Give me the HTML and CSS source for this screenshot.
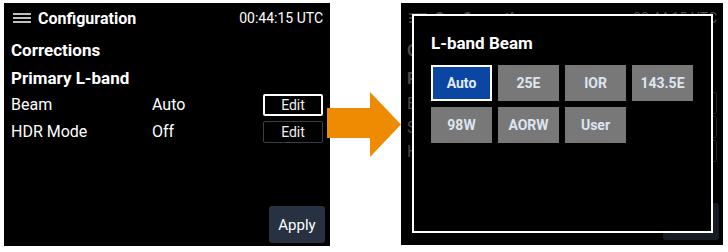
FILE: index.html
```html
<!DOCTYPE html>
<html>
<head>
<meta charset="utf-8">
<link rel="stylesheet" href="styles.css">
</head>
<body>
<div class="stage">
  <section class="screen main">
    <header class="bar">
      <svg class="burger" width="18" height="10" viewBox="0 0 18 10"><path d="M0 1H18M0 5H18M0 9H18" stroke="#fff" stroke-width="1.6"/></svg>
      <span class="title">Configuration</span>
      <span class="clock">00:44:15 UTC</span>
    </header>
    <div class="heading first">Corrections</div>
    <div class="heading">Primary L-band</div>
    <div class="row"><span class="label">Beam</span><span class="value">Auto</span><button class="edit focus">Edit</button></div>
    <div class="row"><span class="label">HDR Mode</span><span class="value">Off</span><button class="edit">Edit</button></div>
    <div class="footer"><button class="apply">Apply</button></div>
  </section>

  <div class="arrow">
    <svg width="71" height="243" viewBox="0 0 71 243"><polygon points="-3,105 40,105 40,89 71,121.5 40,154 40,135 -3,135" fill="#ef8b03"/></svg>
  </div>

  <section class="screen popup">
    <div class="behind">
      <header class="bar">
        <svg class="burger" width="18" height="10" viewBox="0 0 18 10"><path d="M0 1H18M0 5H18M0 9H18" stroke="#4a4a4a" stroke-width="1.6"/></svg>
        <span class="title">Configuration</span>
        <span class="clock">00:44:15 UTC</span>
      </header>
      <div class="heading first">C</div>
      <div class="heading">P</div>
      <div class="row"><span class="value">B</span><button class="edit"></button></div>
      <div class="row"><span class="value">S</span><button class="edit"></button></div>
      <div class="row"><span class="value">H</span><button class="edit"></button></div>
      <div class="footer"><button class="apply"></button></div>
    </div>
    <div class="modal">
      <div class="modal-title">L-band Beam</div>
      <div class="choices">
        <button class="choice selected">Auto</button>
        <button class="choice">25E</button>
        <button class="choice">IOR</button>
        <button class="choice">143.5E</button>
        <button class="choice">98W</button>
        <button class="choice">AORW</button>
        <button class="choice">User</button>
      </div>
    </div>
  </section>
</div>
</body>
</html>
```

FILE: styles.css
```css
html, body {
  margin: 0;
  padding: 0;
  background: #ffffff;
}

body {
  width: 728px;
  height: 252px;
  overflow: hidden;
  font-family: Roboto, "Liberation Sans", sans-serif;
}

.stage {
  display: flex;
  align-items: flex-start;
  padding: 3px 0 0 4px;
}

.screen {
  background: #000;
  color: #fff;
  box-sizing: border-box;
}

.main {
  width: 326px;
  height: 243px;
  display: flex;
  flex-direction: column;
  padding: 0 5px 3px 7px;
}

.bar {
  height: 30px;
  display: flex;
  align-items: center;
  padding: 0 2px;
}

.burger {
  display: block;
  margin-right: 7px;
}

.title {
  font-size: 16px;
  font-weight: 700;
}

.clock {
  margin-left: auto;
  font-size: 14px;
}

.heading {
  font-size: 17px;
  font-weight: 700;
  height: 28px;
  display: flex;
  align-items: center;
}

.heading.first {
  height: 30px;
  margin-top: 2px;
}

.heading.first + .heading {
  height: 26px;
}

.row {
  height: 27px;
  display: flex;
  align-items: center;
  font-size: 16px;
}

.label {
  width: 141px;
}

.value {
  flex: 1;
}

.edit {
  width: 60px;
  height: 22px;
  margin-right: 2px;
  box-sizing: border-box;
  background: #000;
  color: #eee;
  border: 1.5px solid #3a3d44;
  border-radius: 2px;
  font-family: Roboto, "Liberation Sans", sans-serif;
  font-size: 14px;
  padding: 0;
}

.edit.focus {
  border: 2px solid #fff;
}

.footer {
  margin-top: auto;
  display: flex;
  justify-content: flex-end;
}

.apply {
  width: 56px;
  height: 37px;
  background: #283142;
  color: #fff;
  border: none;
  border-radius: 3px;
  font-family: Roboto, "Liberation Sans", sans-serif;
  font-size: 15px;
  padding: 0;
}

.arrow {
  width: 71px;
  height: 243px;
}

.arrow svg {
  display: block;
  overflow: visible;
}

.popup {
  width: 322px;
  height: 242px;
  position: relative;
  overflow: hidden;
}

.behind {
  height: 100%;
  display: flex;
  flex-direction: column;
  box-sizing: border-box;
  padding: 0 4px 5px 6px;
  color: #4a4a4a;
}

.behind .row {
  height: 24px;
}

.behind .edit {
  border-color: #222;
}

.behind .apply {
  background: #161b24;
}

.modal {
  position: absolute;
  left: 11px;
  top: 11px;
  width: 301px;
  height: 219px;
  box-sizing: border-box;
  border: 2px solid #fff;
  background: #000;
  padding: 16px 0 0 17px;
}

.modal-title {
  font-size: 17px;
  font-weight: 700;
  line-height: 22px;
  margin-bottom: 11px;
}

.choices {
  display: grid;
  grid-template-columns: repeat(4, 61px);
  grid-auto-rows: 36px;
  gap: 6px;
}

.choice {
  background: #787878;
  color: #dce5f1;
  border: none;
  padding: 0;
  font-family: Roboto, "Liberation Sans", sans-serif;
  font-size: 14px;
  font-weight: 700;
}

.choice.selected {
  background: #0b46a3;
  border: 2px solid #fff;
  color: #e2ebf8;
}
```
